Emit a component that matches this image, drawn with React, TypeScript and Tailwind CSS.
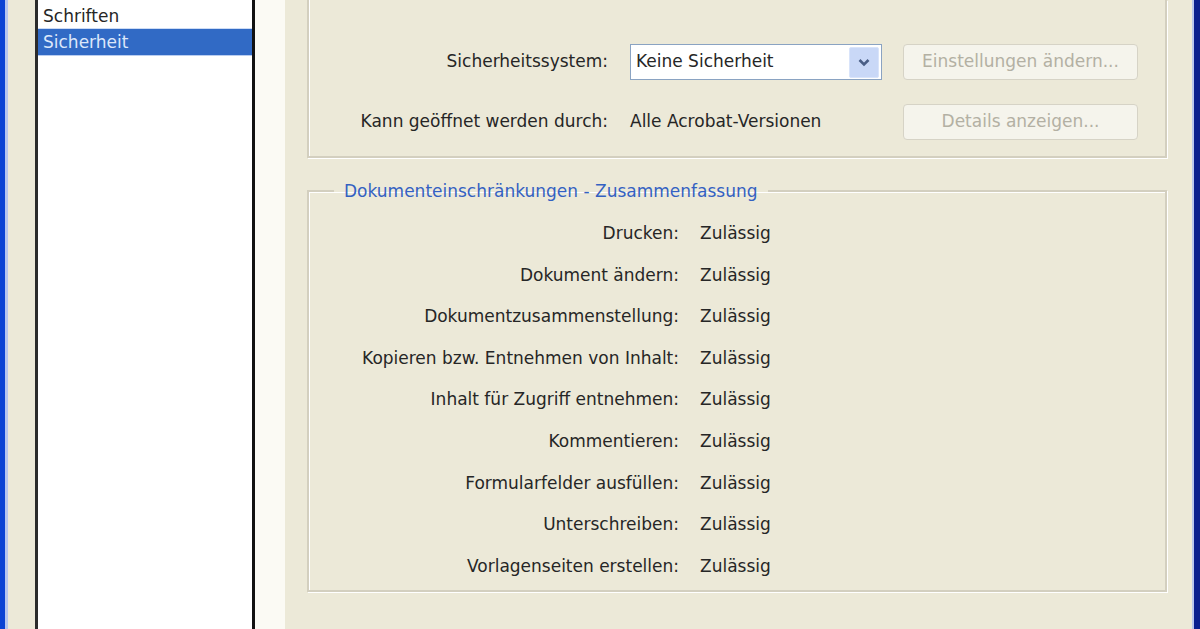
import React from 'react';

const restrictions = [
  'Drucken:',
  'Dokument ändern:',
  'Dokumentzusammenstellung:',
  'Kopieren bzw. Entnehmen von Inhalt:',
  'Inhalt für Zugriff entnehmen:',
  'Kommentieren:',
  'Formularfelder ausfüllen:',
  'Unterschreiben:',
  'Vorlagenseiten erstellen:',
];

function XpButton({ children }: { children: React.ReactNode }) {
  return (
    <div className="w-[235px] h-[36px] flex items-center justify-center rounded-[4px] border border-[#d6d3c6] bg-[#f5f4ec] text-[#b3b0a3]">
      {children}
    </div>
  );
}

export default function App() {
  return (
    <div className="w-[1200px] h-[629px] overflow-hidden flex bg-[#ece9d8] text-[17px] text-[#262626] font-['DejaVu_Sans',Verdana,sans-serif]">
      {/* window frame, left */}
      <div className="w-[5px] bg-[#0b43d4]" />
      <div className="w-[3px] bg-[#b6c6ef]" />
      <div className="w-[27px] bg-[#ece9d8]" />

      {/* category list */}
      <div className="w-[220px] bg-white border-l-[3px] border-r-[3px] border-l-[#2b2b2b] border-r-[#111] pt-[4px]">
        <div className="h-[24px] pl-[5px] leading-[24px]">Schriften</div>
        <div className="h-[26px] mt-px pl-[5px] leading-[26px] bg-[#316ac5] text-[#dce7fa] shadow-[0_1px_0_#b9cdf0,0_-1px_0_#cddcf5]">
          Sicherheit
        </div>
      </div>

      <div className="w-[30px] bg-[#fbfaf4]" />

      {/* main panel */}
      <div className="flex-1 flex flex-col pl-[22px] pr-[25px]">
        <div className="h-[158px] border-2 border-t-0 border-[#d3cfbf] shadow-[inset_1px_0_0_#fff,1px_1px_0_#fff] pt-[44px] flex flex-col gap-[24px]">
          <div className="flex items-center h-[36px]">
            <div className="w-[299px] text-right">Sicherheitssystem:</div>
            <div className="ml-[22px] w-[252px] h-[36px] border border-[#8aa3c2] bg-white flex items-center pl-[5px] pr-[2px]">
              <span className="flex-1">Keine Sicherheit</span>
              <div className="w-[30px] h-[31px] rounded-[2px] bg-[#c9d8f7] border border-[#d9e4fa] flex items-center justify-center">
                <svg width="12" height="9" viewBox="0 0 12 9">
                  <path d="M1.5 2 L6 6.5 L10.5 2" fill="none" stroke="#4a5e86" strokeWidth="2.6" />
                </svg>
              </div>
            </div>
            <div className="ml-[21px]">
              <XpButton>Einstellungen ändern...</XpButton>
            </div>
          </div>
          <div className="flex items-center h-[36px]">
            <div className="w-[299px] text-right">Kann geöffnet werden durch:</div>
            <div className="ml-[22px] w-[252px]">Alle Acrobat-Versionen</div>
            <div className="ml-[21px]">
              <XpButton>Details anzeigen...</XpButton>
            </div>
          </div>
        </div>

        <fieldset className="mt-[23px] h-[411px] border-2 border-[#d3cfbf] shadow-[inset_1px_1px_0_#fff,1px_1px_0_#fff] pt-[12px]">
          <legend className="ml-[25px] px-[10px] leading-[20px] text-[#3461c2]">
            Dokumenteinschränkungen - Zusammenfassung
          </legend>
          {restrictions.map((label) => (
            <div key={label} className="flex items-center h-[41.6px]">
              <div className="w-[370px] text-right">{label}</div>
              <div className="ml-[21px]">Zulässig</div>
            </div>
          ))}
        </fieldset>
      </div>

      {/* window frame, right */}
      <div className="w-[2px] bg-[#b9c6ee]" />
      <div className="w-[6px] bg-[#0a1f8f]" />
    </div>
  );
}
